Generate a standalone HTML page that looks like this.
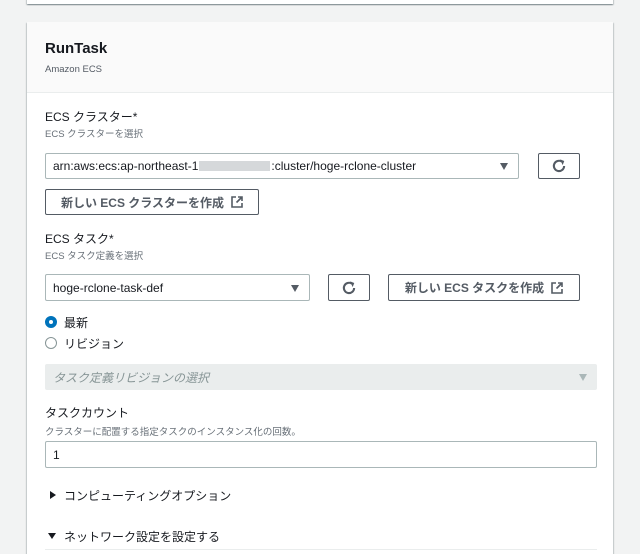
<!DOCTYPE html>
<html style="width:640px;height:554px;overflow:hidden"><head><meta charset="utf-8"><style>
*{box-sizing:border-box;margin:0;padding:0}
body{width:640px;height:554px;overflow:hidden;background:#f2f3f3;font-family:"Liberation Sans","Noto Sans CJK JP",sans-serif;color:#16191f;position:relative}
.a{position:absolute}
.card{background:#fff;box-shadow:0 1px 1px rgba(0,28,36,.3),1px 1px 1px rgba(0,28,36,.15),-1px 1px 1px rgba(0,28,36,.15)}
.lbl{font-size:12px;color:#16191f}
.sub{font-size:9.5px;color:#687078}
.box{border:1px solid #aab7b8;border-radius:2px;background:#fff;font-size:12px;display:flex;align-items:center;padding-left:7px}
.btn{border:1px solid #545b64;border-radius:2px;background:#fff;font-size:12px;font-weight:bold;color:#545b64;display:flex;align-items:center;justify-content:center;gap:7px}
.tri{position:absolute;right:10px;top:50%;margin-top:-3px;width:0;height:0;border-left:4.5px solid transparent;border-right:4.5px solid transparent;border-top:7px solid #545b64}
</style></head><body>
<div class="a card" style="left:27px;top:-10px;width:586px;height:14px"></div>
<div class="a card" style="left:27px;top:22px;width:586px;height:540px"></div>
<div class="a" style="left:27px;top:22px;width:586px;height:71px;background:#fafafa;border-bottom:1px solid #eaeded"></div>
<div class="a" style="left:45px;top:40px;font-size:15px;font-weight:bold">RunTask</div>
<div class="a sub" style="left:45px;top:64px;font-size:9.5px;color:#545b64">Amazon ECS</div>

<div class="a lbl" style="left:45px;top:108px">ECS クラスター*</div>
<div class="a sub" style="left:45px;top:126px">ECS クラスターを選択</div>
<div class="a box" style="left:45px;top:153px;width:474px;height:26px">arn:aws:ecs:ap-northeast-1<span style="display:inline-block;width:71px;height:10px;background:#d5d8da;margin:0 1px"></span>:cluster/hoge-rclone-cluster<div class="tri"></div></div>
<div class="a btn" style="left:538px;top:153px;width:42px;height:26px"><svg width="16" height="16" viewBox="0 0 14 14"><path d="M11.5 7A4.5 4.5 0 1 1 9.5 3.2" fill="none" stroke="#545b64" stroke-width="1.8"/><path d="M8 1.2L11.6 2.6 10.2 6.2z" fill="#545b64"/></svg></div>
<div class="a btn" style="left:45px;top:189px;width:214px;height:26px">新しい ECS クラスターを作成 <svg width="12" height="12" viewBox="0 0 12 12"><path d="M5 1H1v10h10V7M7 1h4v4M11 1L5.5 6.5" fill="none" stroke="#545b64" stroke-width="1.6"/></svg></div>

<div class="a lbl" style="left:45px;top:230px">ECS タスク*</div>
<div class="a sub" style="left:45px;top:248px">ECS タスク定義を選択</div>
<div class="a box" style="left:45px;top:274px;width:265px;height:27px">hoge-rclone-task-def<div class="tri"></div></div>
<div class="a btn" style="left:328px;top:274px;width:42px;height:27px"><svg width="16" height="16" viewBox="0 0 14 14"><path d="M11.5 7A4.5 4.5 0 1 1 9.5 3.2" fill="none" stroke="#545b64" stroke-width="1.8"/><path d="M8 1.2L11.6 2.6 10.2 6.2z" fill="#545b64"/></svg></div>
<div class="a btn" style="left:388px;top:274px;width:192px;height:27px">新しい ECS タスクを作成 <svg width="12" height="12" viewBox="0 0 12 12"><path d="M5 1H1v10h10V7M7 1h4v4M11 1L5.5 6.5" fill="none" stroke="#545b64" stroke-width="1.6"/></svg></div>

<div class="a" style="left:45px;top:316px;width:12px;height:12px;border-radius:50%;border:4px solid #0073bb;background:#fff"></div>
<div class="a lbl" style="left:64px;top:314px">最新</div>
<div class="a" style="left:45px;top:337px;width:12px;height:12px;border-radius:50%;border:1px solid #879596;background:#fff"></div>
<div class="a lbl" style="left:64px;top:335px">リビジョン</div>

<div class="a" style="left:45px;top:364px;width:552px;height:26px;background:#eaeded;border-radius:2px;font-size:12px;font-style:italic;color:#879596;padding:5px 8px">タスク定義リビジョンの選択<div class="tri" style="border-top-color:#aab7b8"></div></div>

<div class="a lbl" style="left:45px;top:404px">タスクカウント</div>
<div class="a sub" style="left:45px;top:424px">クラスターに配置する指定タスクのインスタンス化の回数。</div>
<div class="a box" style="left:45px;top:441px;width:552px;height:27px">1</div>

<div class="a" style="left:50px;top:491px;width:0;height:0;border-top:4px solid transparent;border-bottom:4px solid transparent;border-left:6px solid #16191f"></div>
<div class="a lbl" style="left:64px;top:487px">コンピューティングオプション</div>
<div class="a" style="left:48px;top:533px;width:0;height:0;border-left:4px solid transparent;border-right:4px solid transparent;border-top:6px solid #16191f"></div>
<div class="a lbl" style="left:64px;top:528px">ネットワーク設定を設定する</div>
<div class="a" style="left:45px;top:549px;width:552px;height:1px;background:#eaeded"></div>
</body></html>
